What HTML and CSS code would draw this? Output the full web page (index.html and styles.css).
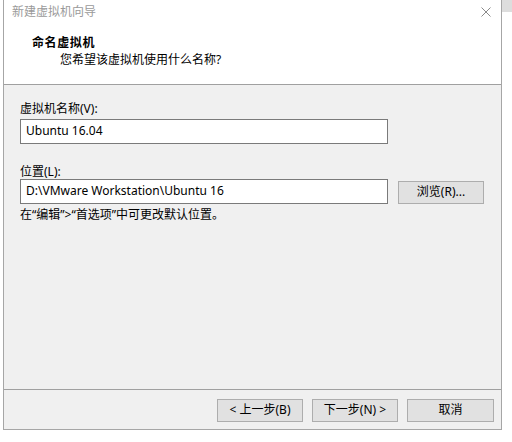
FILE: index.html
```html
<!DOCTYPE html>
<html lang="zh-CN">
<head>
<meta charset="utf-8">
<title>新建虚拟机向导</title>
<link rel="stylesheet" href="styles.css">
</head>
<body>
<div class="page">
  <div class="window">
    <div class="header">
      <div class="titlebar">
        <span class="title">新建虚拟机向导</span>
        <svg class="close" width="10" height="10" viewBox="0 0 10 10"><path d="M0.5 0.5 L9.5 9.5 M9.5 0.5 L0.5 9.5" stroke="#8a8a8a" stroke-width="1" fill="none"/></svg>
      </div>
      <div class="heading">命名虚拟机</div>
      <div class="subheading">您希望该虚拟机使用什么名称?</div>
    </div>
    <div class="content">
      <div class="label label-first">虚拟机名称(V):</div>
      <div class="field name-field">Ubuntu 16.04</div>
      <div class="label label-second">位置(L):</div>
      <div class="row">
        <div class="field path-field">D:\VMware Workstation\Ubuntu 16</div>
        <div class="btn browse">浏览(R)...</div>
      </div>
      <div class="note">在“编辑”&gt;“首选项”中可更改默认位置。</div>
    </div>
    <div class="footer">
      <div class="btn">&lt; 上一步(B)</div>
      <div class="btn">下一步(N) &gt;</div>
      <div class="btn btn-wide">取消</div>
    </div>
  </div>
  <div class="side"><div class="side-block"></div></div>
</div>
</body>
</html>
```
FILE: styles.css
```css
html, body {
  margin: 0;
  padding: 0;
  background: #ffffff;
}
body {
  font-family: "Noto Sans", "Noto Sans CJK SC", sans-serif;
  font-size: 12px;
  color: #000;
}
.page {
  display: flex;
  align-items: flex-start;
  width: 512px;
  height: 442px;
}
.window {
  margin-left: 3px;
  width: 497px;
  border-left: 1px solid #a6a6a6;
  border-right: 1px solid #a6a6a6;
  border-bottom: 1px solid #a6a6a6;
  display: flex;
  flex-direction: column;
  background: #f0f0f0;
}
.side {
  flex: 1;
}
.side-block {
  height: 12px;
  background: #dddddd;
}
.header {
  height: 84px;
  background: #ffffff;
  border-bottom: 1px solid #a0a0a0;
  box-sizing: content-box;
}
.titlebar {
  display: flex;
  justify-content: space-between;
  align-items: flex-start;
  padding: 3px 10px 0 8px;
  height: 30px;
  box-sizing: border-box;
}
.title {
  color: #9a9a9a;
  line-height: 18px;
}
.close {
  margin-top: 4px;
  display: block;
}
.heading {
  font-weight: bold;
  line-height: 16px;
  padding-left: 28px;
  margin-top: 5px;
  letter-spacing: 0.6px;
}
.subheading {
  line-height: 16px;
  padding-left: 56px;
  margin-top: 1px;
}
.content {
  height: 304px;
  padding: 16px 0 0 16px;
  box-sizing: border-box;
}
.label {
  line-height: 16px;
}
.label-first {
  margin-bottom: 2px;
}
.label-second {
  margin-top: 20px;
  margin-bottom: -1px;
}
.field {
  width: 368px;
  height: 25px;
  box-sizing: border-box;
  border: 1px solid #7a7a7a;
  background: #ffffff;
  padding: 0 5px;
  line-height: 22px;
  white-space: nowrap;
}
.row {
  display: flex;
  align-items: flex-start;
  gap: 10px;
}
.btn {
  width: 86px;
  height: 23px;
  box-sizing: border-box;
  border: 1px solid #adadad;
  background: #e1e1e1;
  text-align: center;
  line-height: 20px;
}
.btn-wide {
  width: 87px;
}
.browse {
  margin-top: 2px;
  height: 23px;
}
.note {
  margin-top: 3px;
  line-height: 16px;
}
.footer {
  height: 40px;
  box-sizing: border-box;
  border-top: 1px solid #a0a0a0;
  display: flex;
  justify-content: flex-end;
  gap: 9px;
  padding: 9px 7px 0 0;
}
```
